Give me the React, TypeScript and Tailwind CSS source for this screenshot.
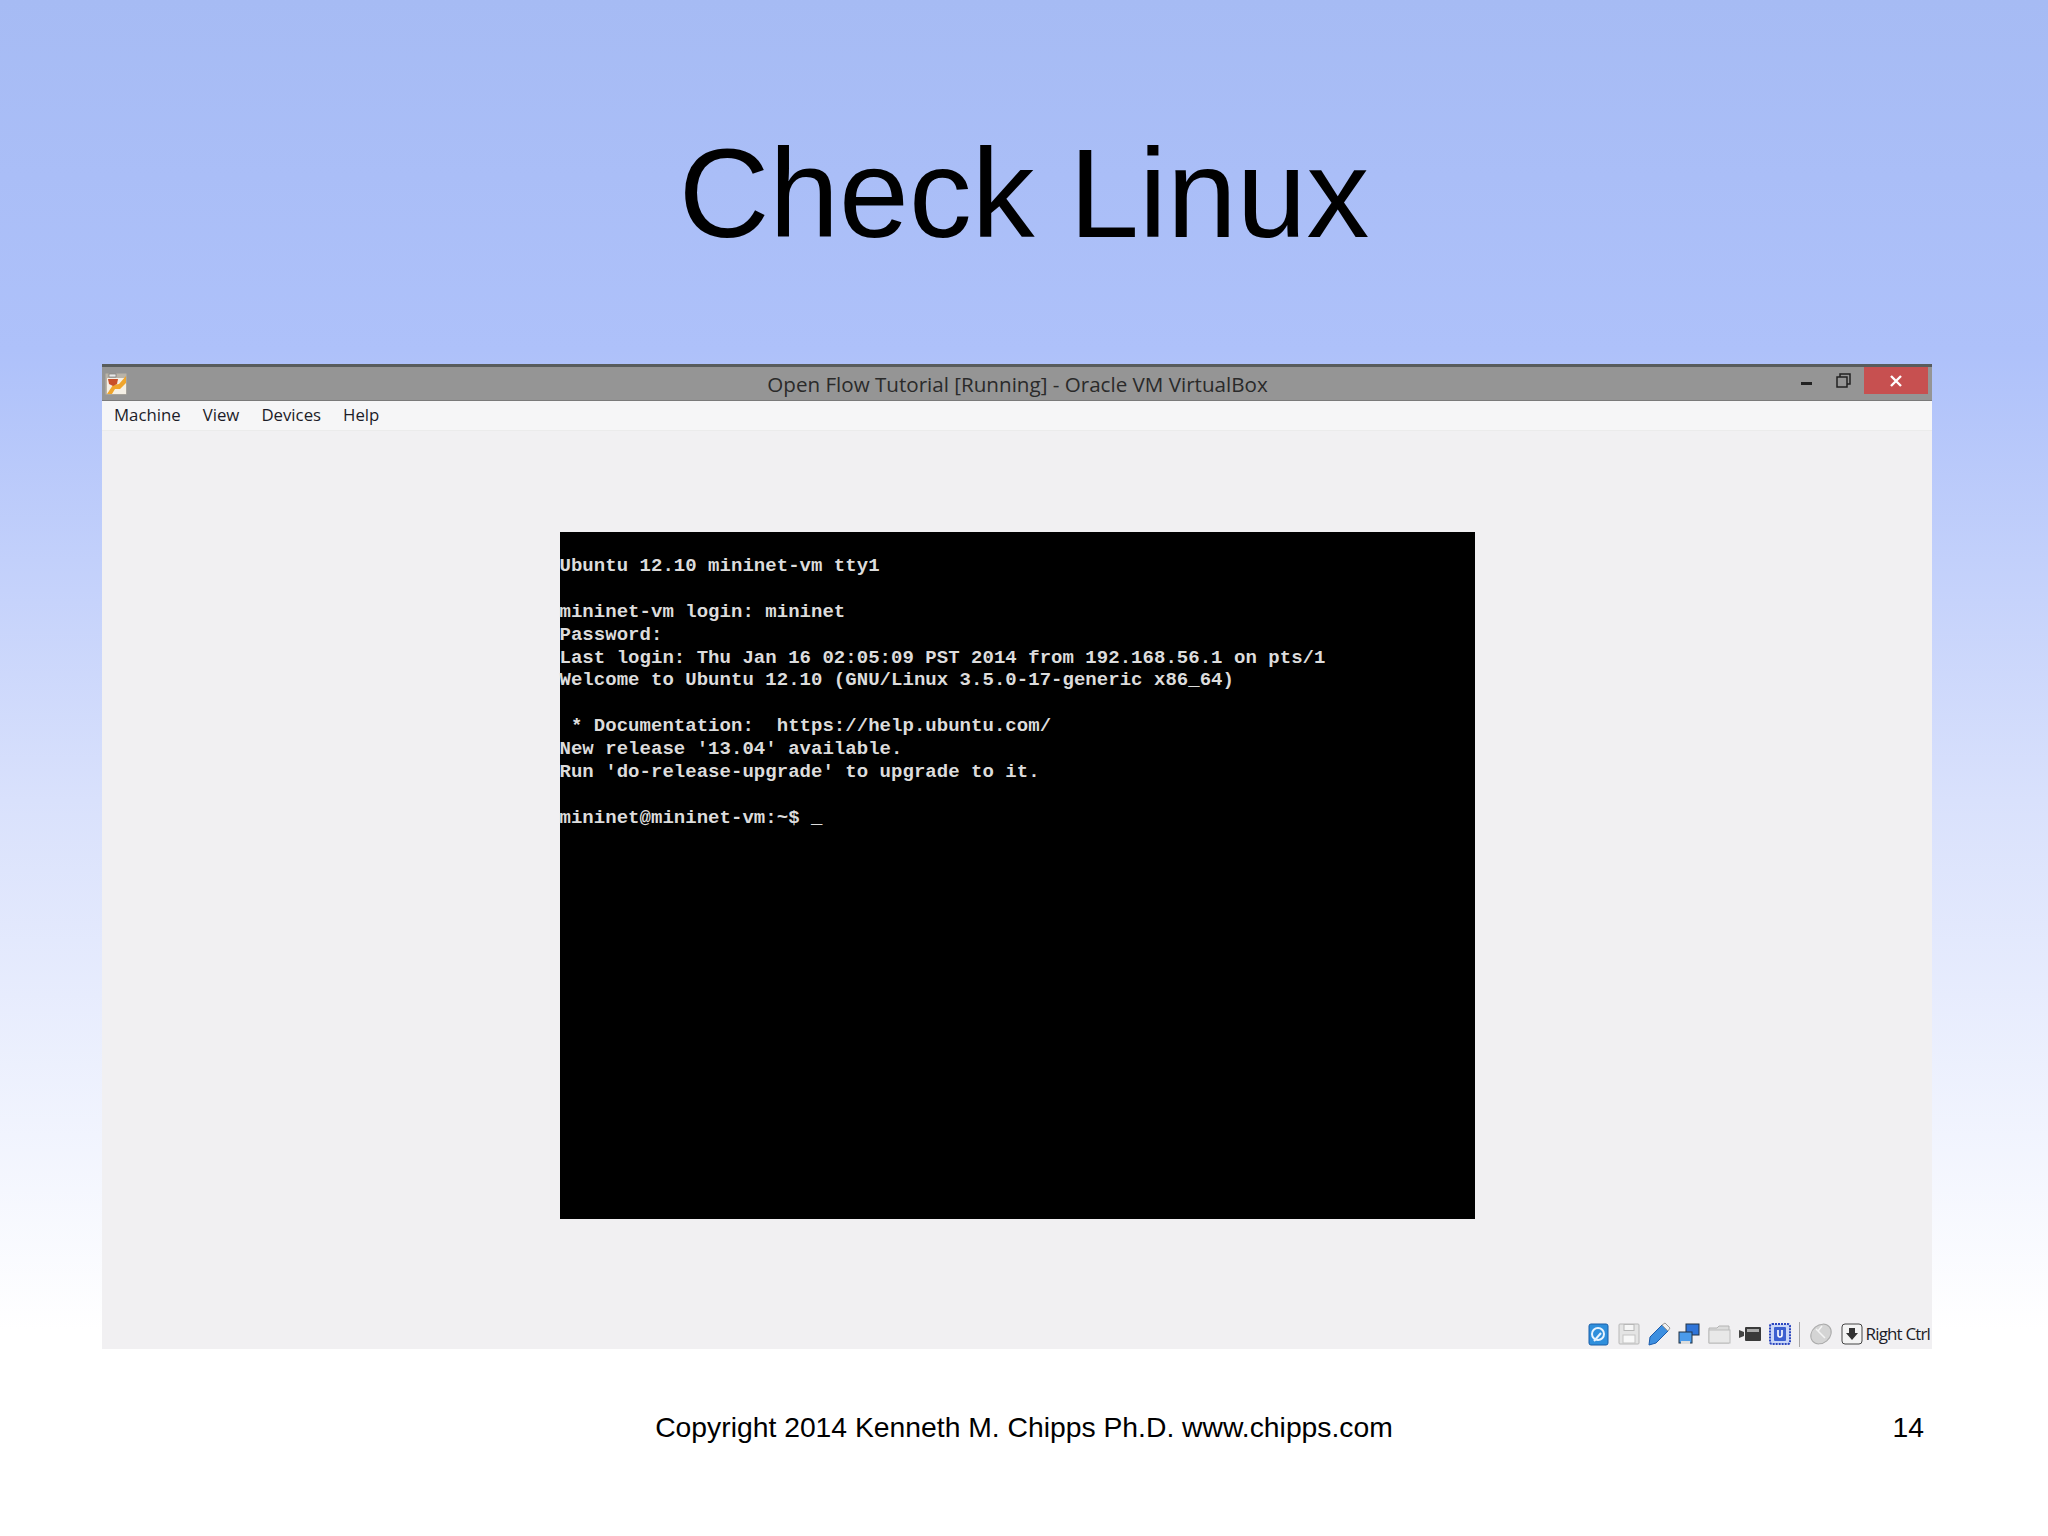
const terminalLines = [
  "Ubuntu 12.10 mininet-vm tty1",
  "",
  "mininet-vm login: mininet",
  "Password:",
  "Last login: Thu Jan 16 02:05:09 PST 2014 from 192.168.56.1 on pts/1",
  "Welcome to Ubuntu 12.10 (GNU/Linux 3.5.0-17-generic x86_64)",
  "",
  " * Documentation:  https://help.ubuntu.com/",
  "New release '13.04' available.",
  "Run 'do-release-upgrade' to upgrade to it.",
  "",
  "mininet@mininet-vm:~$ _",
];

function AppIcon() {
  return (
    <svg width="22" height="22" viewBox="0 0 22 22" className="ml-[3px]">
      <rect x="0.5" y="0.5" width="21" height="21" fill="#b9b3a8" />
      <rect x="2" y="5" width="19" height="16" fill="#f5f0e6" />
      <path d="M2 21 L8 12 L14 11 L21 3 V10 L15 16 L10 16 L7 21 Z" fill="#f0a52c" />
      <path d="M3 6 H13 L12 11 L8 13 L4 11 Z" fill="#c9502a" />
      <rect x="4" y="1" width="7" height="3" fill="#e8e8e8" stroke="#666" strokeWidth="0.6" />
    </svg>
  );
}

function StatusIcons() {
  return (
    <div className="flex items-center">
      <svg width="21" height="23" viewBox="0 0 21 23" className="mr-[9px]">
        <rect x="1" y="1" width="19" height="21" rx="2" fill="#2f8fdc" stroke="#1b5fa8" />
        <circle cx="10" cy="11" r="6" fill="none" stroke="#e8f4ff" strokeWidth="2" />
        <path d="M6 18 L13 10" stroke="#e8f4ff" strokeWidth="2" />
      </svg>
      <svg width="22" height="22" viewBox="0 0 22 22" className="mr-[7px]">
        <rect x="1" y="1" width="20" height="20" rx="1" fill="#e4e4e4" stroke="#b8b8b8" />
        <rect x="6" y="1.5" width="10" height="6" fill="#f6f6f6" stroke="#b8b8b8" />
        <rect x="5" y="12" width="12" height="8" fill="#f8f8f8" stroke="#c4c4c4" />
      </svg>
      <svg width="24" height="24" viewBox="0 0 24 24" className="mr-[7px]">
        <path d="M2 23 L3 15 L15 3 L21 9 L9 21 Z" fill="#3d8fe0" stroke="#1c5cab" />
        <path d="M15 3 L18 1 L23 6 L21 9 Z" fill="#f0f0f0" stroke="#999" />
      </svg>
      <svg width="22" height="22" viewBox="0 0 22 22" className="mr-[8px]">
        <rect x="8" y="1" width="13" height="11" fill="#2f74d8" stroke="#234" />
        <rect x="1" y="9" width="13" height="11" fill="#4b9bea" stroke="#234" />
        <rect x="3" y="18" width="9" height="3" fill="#ddd" />
      </svg>
      <svg width="23" height="20" viewBox="0 0 23 20" className="mr-[7px]">
        <path d="M1 4 H9 L11 2 H21 V19 H1 Z" fill="#dcdcdc" stroke="#b4b4b4" />
        <rect x="1" y="6" width="21" height="13" fill="#e8e8e8" stroke="#bcbcbc" />
      </svg>
      <svg width="23" height="16" viewBox="0 0 23 16" className="mr-[7px]">
        <path d="M1 4 L6 6 V10 L1 12 Z" fill="#444" />
        <rect x="7" y="1" width="16" height="14" rx="1" fill="#3a3a3a" />
        <rect x="9" y="3" width="12" height="3" fill="#aaa" />
      </svg>
      <svg width="24" height="24" viewBox="0 0 24 24" className="mr-[7px]">
        <rect x="2" y="2" width="20" height="20" rx="2" fill="#c9d6f7" stroke="#2b46c0" strokeWidth="2" strokeDasharray="2 1" />
        <rect x="6" y="5" width="12" height="14" rx="1" fill="#3b5fd0" />
        <path d="M10 8 V13 A2 2 0 0 0 14 13 V8" fill="none" stroke="#fff" strokeWidth="1.6" />
      </svg>
      <div className="mr-[9px] h-[25px] w-px bg-[#a8a8a8]" />
      <svg width="24" height="24" viewBox="0 0 24 24" className="mr-[8px]">
        <ellipse cx="12" cy="12" rx="11" ry="9" transform="rotate(-40 12 12)" fill="#d4d4d4" stroke="#aaa" />
        <path d="M7 7 L16 16 M13 4 L9 9" stroke="#f4f4f4" strokeWidth="1.5" />
      </svg>
      <svg width="22" height="22" viewBox="0 0 22 22" className="mr-[3px]">
        <rect x="1" y="1" width="20" height="20" rx="3" fill="#f4f4f4" stroke="#444" />
        <path d="M8 5 H14 V10 H17 L11 17 L5 10 H8 Z" fill="#333" />
      </svg>
    </div>
  );
}

export default function App() {
  return (
    <div className="flex h-[1536px] w-[2048px] flex-col overflow-hidden bg-[linear-gradient(to_bottom,#a6bbf4_0px,#aec1fa_350px,#d9e1fc_800px,#ffffff_1330px)] font-['Liberation_Sans',sans-serif]">
      <header className="flex h-[364px] items-start justify-center pt-[120px]">
        <h1 className="text-[125.5px] leading-[147px] font-normal text-black">Check Linux</h1>
      </header>

      <main className="ml-[102px] mr-[116px] flex h-[985px] flex-col bg-[#f1f0f2]">
        <div className="flex h-[37px] items-center border-t-[3px] border-b border-t-[#585c5c] border-b-[#7a7a7a] bg-[#959595]">
          <AppIcon />
          <span className="flex-1 pl-[107px] pt-[2px] text-center font-['Open_Sans',sans-serif] text-[20.6px] text-[#2a2a2a]">
            Open Flow Tutorial [Running] - Oracle VM VirtualBox
          </span>
          <div className="mb-[6px] flex items-center">
            <div className="mt-[6px] mr-[24px] h-[3px] w-[11px] bg-[#222]" />
            <svg width="15" height="15" viewBox="0 0 15 15" className="mr-[13px]" fill="none" stroke="#222" strokeWidth="1.5">
              <rect x="1" y="4" width="10" height="10" />
              <path d="M4 4 V1 H14 V11 H11" />
            </svg>
            <div className="mr-[4px] flex h-[27px] w-[64px] items-center justify-center bg-[#c75050]">
              <svg width="12" height="12" viewBox="0 0 12 12" stroke="#fff" strokeWidth="2.4">
                <path d="M1 1 L11 11 M11 1 L1 11" />
              </svg>
            </div>
          </div>
        </div>

        <nav className="flex h-[30px] items-center gap-[22px] border-b border-[#ebebeb] bg-[#f6f6f7] pb-[2px] pl-[12px] font-['Open_Sans',sans-serif] text-[16.8px] text-[#1c1c28]">
          <span>Machine</span>
          <span>View</span>
          <span>Devices</span>
          <span>Help</span>
        </nav>

        <div className="flex flex-1 items-start justify-center pt-[101px]">
          <pre className="h-[687px] w-[915px] bg-black pt-[23px] font-['Liberation_Mono',monospace] text-[19px] leading-[22.9px] font-bold tracking-[0.03px] text-[#dcdcdc]">
            {terminalLines.map((line, i) => (
              <div key={i} className="h-[22.9px]">{line}</div>
            ))}
          </pre>
        </div>

        <footer className="flex h-[36px] items-center justify-end pr-[2px] pt-[6px]">
          <StatusIcons />
          <span className="font-['Open_Sans',sans-serif] text-[17px] tracking-[-0.85px] text-[#1c1c28]">Right Ctrl</span>
        </footer>
      </main>

      <div className="relative mx-[102px] mt-[61px] flex justify-center text-[28.3px] leading-[34px] text-black">
        <span>Copyright 2014 Kenneth M. Chipps Ph.D. www.chipps.com</span>
        <span className="absolute right-[22px]">14</span>
      </div>
    </div>
  );
}
